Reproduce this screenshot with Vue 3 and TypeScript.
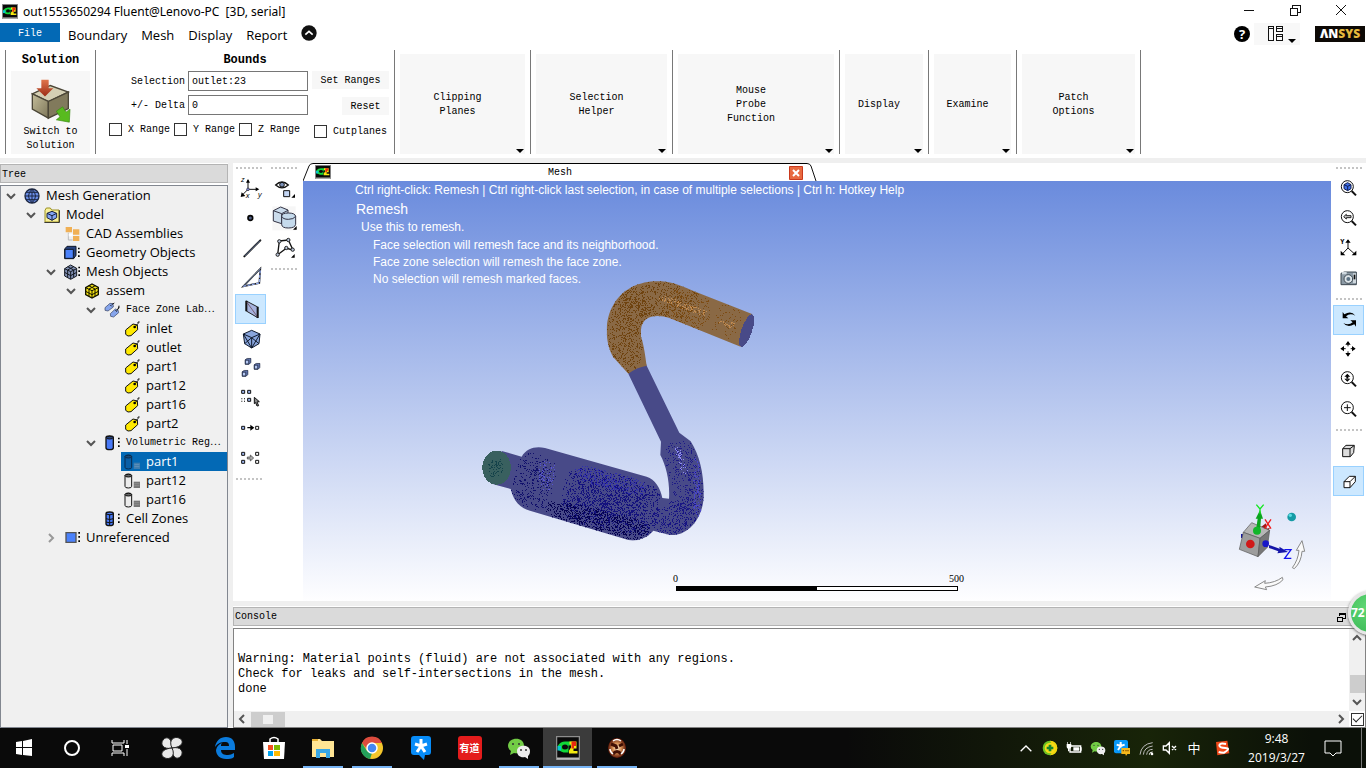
<script setup lang="ts">
interface TreeNode { label: string; icon: string; level: number; toggle?: 'open' | 'closed'; selected?: boolean; mono?: boolean }
interface Panel { lines: string[]; size: string }
interface Task { icon: string; title: string; state?: 'running' | 'active' }
interface Patch { cx: number; cy: number; rx: number; ry: number; angle: number; density: number; color: string; seed: number }

const menus: string[] = ['Boundary', 'Mesh', 'Display', 'Report']

const panels: Panel[] = [
  { lines: ['Clipping', 'Planes'], size: 'w-clip' },
  { lines: ['Selection', 'Helper'], size: 'w-sel' },
  { lines: ['Mouse', 'Probe', 'Function'], size: 'w-mouse' },
  { lines: ['Display'], size: 'w-small' },
  { lines: ['Examine'], size: 'w-examine' },
  { lines: ['Patch', 'Options'], size: 'w-patch' },
]

const nodes: TreeNode[] = [
  { label: 'Mesh Generation', icon: 'globe', level: 0, toggle: 'open' },
  { label: 'Model', icon: 'model', level: 1, toggle: 'open' },
  { label: 'CAD Assemblies', icon: 'cad', level: 2 },
  { label: 'Geometry Objects', icon: 'geometry', level: 2 },
  { label: 'Mesh Objects', icon: 'meshobj', level: 2, toggle: 'open' },
  { label: 'assem', icon: 'assem', level: 3, toggle: 'open' },
  { label: 'Face Zone Lab⋯', icon: 'tags', level: 4, toggle: 'open', mono: true },
  { label: 'inlet', icon: 'tag', level: 5 },
  { label: 'outlet', icon: 'tag', level: 5 },
  { label: 'part1', icon: 'tag', level: 5 },
  { label: 'part12', icon: 'tag', level: 5 },
  { label: 'part16', icon: 'tag', level: 5 },
  { label: 'part2', icon: 'tag', level: 5 },
  { label: 'Volumetric Reg⋯', icon: 'volume', level: 4, toggle: 'open', mono: true },
  { label: 'part1', icon: 'region-on', level: 5, selected: true },
  { label: 'part12', icon: 'region', level: 5 },
  { label: 'part16', icon: 'region', level: 5 },
  { label: 'Cell Zones', icon: 'cells', level: 4 },
  { label: 'Unreferenced', icon: 'unref', level: 2, toggle: 'closed' },
]

const pickTools = ['axes', 'point', 'edge', 'tri', 'face', 'cell', 'objects', 'choose', 'one', 'many']
const viewTools = ['eye', 'solids', 'nodes']
const rightTools: string[][] = [['fit', 'back', 'triad', 'camera'], ['rotate', 'move', 'zoom', 'plus'], ['persp', 'ortho']]
const pressed = new Set(['face', 'rotate', 'ortho'])

const systemTasks: Task[] = [
  { icon: 'windows', title: 'Start' }, { icon: 'cortana', title: 'Search' }, { icon: 'taskview', title: 'Task View' },
]
const tasks: Task[] = [
  { icon: 'edge-browser', title: 'Edge' },
  { icon: 'store', title: 'Store' },
  { icon: 'folder', title: 'Explorer', state: 'running' },
  { icon: 'chrome', title: 'Chrome', state: 'running' },
  { icon: 'star', title: 'Star' },
  { icon: 'youdao', title: 'Youdao' },
  { icon: 'wechat', title: 'WeChat', state: 'running' },
  { icon: 'fluent', title: 'Fluent', state: 'active' },
  { icon: 'orb', title: 'Launcher', state: 'running' },
]
const tray = ['up', 'shield', 'battery', 'wechat', 'starchat', 'wifi', 'mute']

// Mesh texture: one-pixel cells scattered over elliptical patches, denser towards the centre.
function speckle(p: Patch): string {
  let s = p.seed
  const rand = () => { s = (s * 1664525 + 1013904223) % 4294967296; return s / 4294967296 }
  const a = (p.angle * Math.PI) / 180
  const r = Math.max(p.rx, p.ry)
  let d = ''
  for (let y = Math.floor((p.cy - r) / 3) * 3; y < p.cy + r; y += 3) {
    for (let x = Math.floor((p.cx - r) / 3) * 3; x < p.cx + r; x += 3) {
      const u = ((x - p.cx) * Math.cos(a) + (y - p.cy) * Math.sin(a)) / p.rx
      const v = ((y - p.cy) * Math.cos(a) - (x - p.cx) * Math.sin(a)) / p.ry
      const q = u * u * u * u + v * v * v * v
      if (q < 1 && rand() < p.density * (1 - q * 0.6)) d += `M${x} ${y}h3v3h-3z`
    }
  }
  return d
}

const orangePatches: Patch[] = [
  { cx: 470, cy: 180, rx: 60, ry: 130, angle: 12, density: 0.25, color: '#6f430f', seed: 3 },
  { cx: 560, cy: 80, rx: 120, ry: 60, angle: 8, density: 0.22, color: '#6f430f', seed: 11 },
  { cx: 650, cy: 120, rx: 70, ry: 60, angle: 22, density: 0.2, color: '#7d4c14', seed: 17 },
  { cx: 770, cy: 155, rx: 40, ry: 50, angle: 22, density: 0.1, color: '#7d4c14', seed: 19 },
  { cx: 640, cy: 105, rx: 80, ry: 10, angle: 20, density: 0.25, color: '#c08a50', seed: 23 },
  { cx: 770, cy: 160, rx: 26, ry: 10, angle: 20, density: 0.25, color: '#c08a50', seed: 29 },
]
const bluePatches: Patch[] = [
  { cx: 190, cy: 635, rx: 60, ry: 85, angle: 14, density: 0.18, color: '#11106c', seed: 31 },
  { cx: 420, cy: 695, rx: 150, ry: 85, angle: 14, density: 0.36, color: '#14127e', seed: 37 },
  { cx: 385, cy: 750, rx: 160, ry: 34, angle: 14, density: 0.34, color: '#050250', seed: 41 },
  { cx: 420, cy: 630, rx: 110, ry: 26, angle: 14, density: 0.26, color: '#302eae', seed: 43 },
  { cx: 230, cy: 615, rx: 26, ry: 44, angle: 0, density: 0.16, color: '#5754d6', seed: 47 },
  { cx: 645, cy: 620, rx: 48, ry: 110, angle: -14, density: 0.2, color: '#1d1a86', seed: 53 },
  { cx: 620, cy: 740, rx: 70, ry: 50, angle: -20, density: 0.22, color: '#171484', seed: 59 },
  { cx: 680, cy: 650, rx: 12, ry: 90, angle: 0, density: 0.3, color: '#4a46cc', seed: 61 },
  { cx: 632, cy: 570, rx: 10, ry: 44, angle: -18, density: 0.2, color: '#8d8af2', seed: 67 },
]
const greenPatch: Patch = { cx: 75, cy: 592, rx: 22, ry: 28, angle: 0, density: 0.3, color: '#14424a', seed: 71 }
</script>

<template>
  <div class="app">
    <svg class="defs" aria-hidden="true">
      <defs>
        <linearGradient id="g-box" x1="0" y1="0" x2="1" y2="1"><stop offset="0" stop-color="#c4bd9a" /><stop offset="1" stop-color="#7d7659" /></linearGradient>
        <linearGradient id="g-red" x1="0" y1="0" x2="0" y2="1"><stop offset="0" stop-color="#e0764d" /><stop offset="1" stop-color="#9c2c14" /></linearGradient>
        <radialGradient id="g-orb"><stop offset="0" stop-color="#fff4dc" /><stop offset=".45" stop-color="#d99458" /><stop offset="1" stop-color="#5c1606" /></radialGradient>
      </defs>
      <symbol id="fluent" viewBox="0 0 48 48" preserveAspectRatio="none">
        <path d="M1 1h46v46H1z" fill="#0a0a0a" stroke="#8d8d8d" stroke-width="3" /><path d="M2 45h44" stroke="#bbb" stroke-width="4" />
        <path d="M4 19q5-8 14-8h15v8h-8v14H15q-6-2-8-4l-3-2z" fill="#10d838" /><path d="M3 20h7v9H3z" fill="#08c4d0" /><path d="M27 11h14v14h-6v5h8v5H26v-6l4-6v-6h-3z" fill="#f4ea10" /><path d="M31 11h9v9h-4v5h-5z" fill="#ea2a10" /><ellipse cx="18" cy="22" rx="6" ry="5" fill="#0a0a0a" />
      </symbol>
      <symbol id="package" viewBox="0 0 120 132">
        <path d="M4 46l54-25 54 20-60 28z" fill="#d5d0b4" stroke="#4b4637" stroke-width="4" /><path d="M4 46l48 23v50L4 92z" fill="url(#g-box)" stroke="#4b4637" stroke-width="4" /><path d="M52 69l60-28v49l-60 29z" fill="#817a5c" stroke="#4b4637" stroke-width="4" />
        <path d="M31 4h22v25h14L42 54 16 29h15z" fill="url(#g-red)" /><path d="M76 98l19-13 10 16 12-9-2 39-39-7 11-9z" fill="#58bb1e" stroke="#3a8a10" stroke-width="2" />
      </symbol>
      <symbol id="globe" viewBox="0 0 48 48"><circle cx="24" cy="24" r="21" fill="#6a8ee8" stroke="#1c2742" stroke-width="4" /><path d="M3 24h42M24 3v42M7 13h34M7 35h34M24 3q-21 21 0 42M24 3q21 21 0 42" fill="none" stroke="#1c2742" stroke-width="3" /></symbol>
      <symbol id="model" viewBox="0 0 48 48"><path d="M3 10l4-7h12l4 6h22v36H3z" fill="#f7f09a" stroke="#9c9120" stroke-width="3" /><path d="M9 19l15-6 14 6v13l-14 8-15-8z" fill="#84a6f6" stroke="#18203a" stroke-width="3" /><path d="M9 19l15 7 14-7M24 26v14" fill="none" stroke="#18203a" stroke-width="3" /><path d="M1 47h45V10" fill="none" stroke="#222" stroke-width="3" /></symbol>
      <symbol id="cad" viewBox="0 0 48 48"><path d="M5 3h19v16H5zM27 10h19v16H27zM27 30h19v15H27z" fill="#f0b055" /><path d="M13 20v22h13M13 28h11" fill="none" stroke="#bbb" stroke-width="3" /><path d="M14 23h12v8H14z" fill="#fff" /></symbol>
      <symbol id="geometry" viewBox="0 0 48 48"><path d="M2 12l7-8h27v27l-7 10H2z" fill="#27427e" stroke="#101828" stroke-width="3" /><path d="M3 13h25v27H3z" fill="#4b82fb" stroke="#101828" stroke-width="3" /><path d="M42 8h5v5h-5zM42 19h5v5h-5zM42 31h5v5h-5z" /></symbol>
      <symbol id="meshobj" viewBox="0 0 48 48"><path d="M2 14L20 3l18 10v23L20 46 2 36z" fill="#8190b3" stroke="#141820" stroke-width="3" /><path d="M2 14l18 9 18-9M20 23v22M2 25l18 10 18-10M11 8l18 10v22M29 8L11 18v23" fill="none" stroke="#141820" stroke-width="3" /><path d="M43 8h5v5h-5zM43 19h5v5h-5zM43 31h5v5h-5z" /></symbol>
      <symbol id="assem" viewBox="0 0 48 48"><path d="M5 14L24 3l19 10v22L24 45 5 35z" fill="#f6e414" stroke="#141400" stroke-width="4" /><path d="M5 14l19 9 19-9M24 23v22M5 25l19 10 19-10M14 8l19 10v22M34 8L15 18v22" fill="none" stroke="#141400" stroke-width="3" /></symbol>
      <symbol id="tag" viewBox="0 0 48 48"><path d="M5 27L27 9l13 3 1 14-20 18-9 1-7-5z" fill="#ffe900" stroke="#111" stroke-width="3" /><circle cx="32" cy="18" r="4" /><path d="M34 16l8-8V3h5" fill="none" stroke="#111" stroke-width="3" /></symbol>
      <symbol id="tags" viewBox="0 0 48 48"><path d="M3 17L18 4l9 1 1 10-16 12-9-2zM19 35l15-14 8 3 2 8-15 13-9-2z" fill="#86a5ec" stroke="#33405f" stroke-width="2" /><path d="M23 8l8-5M38 26l7-8v-7M19 9l4 4M34 25l4 4" stroke="#222" stroke-width="3" /></symbol>
      <symbol id="volume" viewBox="0 0 48 48"><path d="M6 8q0-5 11-5t11 5v30q0 6-11 6T6 38z" fill="#4879f6" stroke="#111" stroke-width="4" /><ellipse cx="17" cy="8" rx="10" ry="4" fill="#27427e" stroke="#111" stroke-width="3" /><path d="M42 8h5v5h-5zM42 19h5v5h-5zM42 31h5v5h-5z" /></symbol>
      <symbol id="cells" viewBox="0 0 48 48"><path d="M6 8q0-5 11-5t11 5v30q0 6-11 6T6 38z" fill="#4879f6" stroke="#111" stroke-width="4" /><path d="M6 9q11 5 22 0M6 23q11 5 22 0M17 10v34M6 33q11 5 22 0" fill="none" stroke="#111" stroke-width="3" /><path d="M42 8h5v5h-5zM42 19h5v5h-5zM42 31h5v5h-5z" /></symbol>
      <symbol id="region" viewBox="0 0 48 48"><path d="M3 8q0-5 10-5t10 5v32q0 5-10 5T3 40z" fill="#ececec" stroke="#111" stroke-width="3" /><ellipse cx="13" cy="8" rx="10" ry="4" fill="#666" stroke="#111" stroke-width="3" /><path d="M29 26h19v19H29z" fill="#777" /><path d="M31 32h15M31 38h15" stroke="#999" stroke-width="2" /></symbol>
      <symbol id="region-on" viewBox="0 0 48 48"><path d="M3 8q0-5 10-5t10 5v32q0 5-10 5T3 40z" fill="#0a5fa6" stroke="#0a2b4c" stroke-width="3" /><ellipse cx="13" cy="8" rx="10" ry="4" fill="#1a4a78" stroke="#0a2b4c" stroke-width="3" /><path d="M29 26h19v19H29z" fill="#3f7cac" /><path d="M31 32h15M31 38h15" stroke="#6f9cc0" stroke-width="2" /></symbol>
      <symbol id="unref" viewBox="0 0 48 48"><path d="M6 8h30v29H6z" fill="#4b82fb" stroke="#555" stroke-width="4" /><path d="M43 6h5v5h-5zM43 18h5v5h-5zM43 31h5v5h-5z" /></symbol>

      <symbol id="axes" viewBox="0 0 90 90"><path d="M36 49V22M36 49h28M36 49L19 66" stroke="#111" stroke-width="3" /><path d="M30 29l6-11 6 11zM59 43l11 6-11 6zM17 58l-3 14 14-3z" /><circle cx="36" cy="49" r="4" fill="#8a93d8" stroke="#223" stroke-width="2" /></symbol>
      <symbol id="point" viewBox="0 0 90 90"><circle cx="43" cy="45" r="7" fill="#526085" stroke="#050505" stroke-width="5" /></symbol>
      <symbol id="edge" viewBox="0 0 90 90"><path d="M25 70l48-48" stroke="#111" stroke-width="6" stroke-linecap="round" /><path d="M26 69l46-46" stroke="#8fa9d8" stroke-width="2" /></symbol>
      <symbol id="tri" viewBox="0 0 90 90"><path d="M22 70l51-53-3 43z" fill="#fff" stroke="#222" stroke-width="5" /><path d="M22 70l51-53" stroke="#8fa9d8" stroke-width="2" /><path d="M22 70l48-10 3-43" fill="none" stroke="#8fa9ee" stroke-width="4" stroke-dasharray="9 4" /></symbol>
      <symbol id="face" viewBox="0 0 90 90"><path d="M31 24l34 18v32L31 54z" fill="#a4b1dc" stroke="#222" stroke-width="3" /><path d="M31 23v32M65 41v34" stroke="#111" stroke-width="6" /><path d="M32 27l32 44" stroke="#5d3440" stroke-width="2" /></symbol>
      <symbol id="cell" viewBox="0 0 90 90"><path d="M47 22l25 11-3 29-22 13-21-13-4-29z" fill="#89a5dc" stroke="#111b2d" stroke-width="3" /><path d="M22 33l25 11 25-11M47 44v31M22 33l25 42 25-42M26 62l21-18 22 18" fill="none" stroke="#111b2d" stroke-width="3" /></symbol>
      <symbol id="cubelet" viewBox="0 0 20 20"><path d="M2 6l6-4h10v11l-5 5H2z" fill="#6074ac" stroke="#16203a" stroke-width="2" /><path d="M3 7h9v10H3z" fill="#b4c7f2" stroke="#16203a" stroke-width="2" /></symbol>
      <symbol id="objects" viewBox="0 0 90 90"><use href="#cubelet" x="25" y="14" width="22" height="22" /><use href="#cubelet" x="52" y="29" width="22" height="22" /><use href="#cubelet" x="16" y="50" width="22" height="22" /></symbol>
      <symbol id="choose" viewBox="0 0 90 90"><path d="M17 22h9v9h-9zM35 22h9v9h-9zM35 46h9v9h-9z" fill="#9fb8f2" stroke="#111" stroke-width="3" /><path d="M16 46h3v3h-3zM24 46h3v3h-3zM16 53h3v3h-3zM24 53h3v3h-3z" /><path d="M55 43l15 13-7 1 5 11-5 1-4-10-4 3z" fill="#888" stroke="#111" stroke-width="3" /></symbol>
      <symbol id="one" viewBox="0 0 90 90"><path d="M17 40h9v9h-9z" fill="#9fb8f2" stroke="#111" stroke-width="3" /><path d="M59 40h9v9h-9z" fill="#fff" stroke="#111" stroke-width="3" /><path d="M34 42h9v-7l12 9-12 9v-7h-9z" /></symbol>
      <symbol id="many" viewBox="0 0 90 90"><path d="M17 28h9v9h-9zM17 52h9v9h-9z" fill="#9fb8f2" stroke="#111" stroke-width="3" /><path d="M59 28h9v9h-9zM59 52h9v9h-9z" fill="#fff" stroke="#111" stroke-width="3" /><path d="M34 42h9v-6l10 9-10 9v-6h-9z" fill="#aaa" stroke="#333" stroke-width="2" /></symbol>
      <symbol id="eye" viewBox="0 0 90 90"><path d="M14 36q19-18 38 0-19 17-38 0z" fill="#fff" stroke="#111" stroke-width="4" /><circle cx="33" cy="35" r="7" fill="#7a90b8" stroke="#111" stroke-width="3" /><path d="M38 53h18v18H38z" fill="#c4d6f4" stroke="#111" stroke-width="3" /><path d="M72 63v11H61z" /></symbol>
      <symbol id="solids" viewBox="0 0 90 90"><path d="M4 10h70v72H4z" fill="#f6f6f6" /><path d="M7 23l22-11 22 9v36l-16 6L7 54z" fill="#cbdcec" stroke="#334" stroke-width="3" /><path d="M7 23l25 9 19-10M32 32v28" fill="none" stroke="#334" stroke-width="3" /><path d="M32 40q0-10 20-10t22 10v24q-2 11-22 11T32 64z" fill="#c5daec" stroke="#334" stroke-width="3" /><path d="M32 40q4 9 20 9t22-9" fill="none" stroke="#334" stroke-width="3" /><path d="M77 69v11H66z" /></symbol>
      <symbol id="nodes" viewBox="0 0 90 90"><path d="M25 24l27-3 14 30-20-5-26 19z" fill="none" stroke="#111" stroke-width="4" /><g fill="#b9c5d9" stroke="#222" stroke-width="3"><circle cx="25" cy="25" r="5" /><circle cx="52" cy="21" r="5" /><circle cx="65" cy="50" r="5" /><circle cx="46" cy="45" r="5" /><circle cx="20" cy="65" r="5" /></g><path d="M71 63v11H60z" /></symbol>
      <symbol id="lens" viewBox="0 0 90 90"><circle cx="40" cy="41" r="18" fill="#fff" stroke="#111" stroke-width="3" /><path d="M53 54l13 13" stroke="#111" stroke-width="6" /></symbol>
      <symbol id="fit" viewBox="0 0 90 90"><use href="#lens" /><path d="M30 35l11-6 10 6v12l-10 6-11-6z" fill="#3f6fe8" stroke="#0e1c50" stroke-width="3" /><path d="M30 35l11 5 10-5M41 40v12" fill="none" stroke="#0e1c50" stroke-width="3" /></symbol>
      <symbol id="back" viewBox="0 0 90 90"><use href="#lens" /><path d="M29 41l8-7v4h14v6H37v4z" fill="#ccc" stroke="#222" stroke-width="3" /></symbol>
      <symbol id="triad" viewBox="0 0 90 90"><path d="M42 45V22M42 45L24 64M42 45l21 19" stroke="#111" stroke-width="3" /><path d="M34 29l8-10 8 10zM20 53v14h14zM67 53v14H53z" /></symbol>
      <symbol id="camera" viewBox="0 0 90 90"><path d="M21 31l10-4h36v38H21z" fill="#8c9aa5" stroke="#3d4851" stroke-width="3" /><path d="M24 27h14v7H24zM57 31h9v29h-9z" fill="#cfd8de" /><circle cx="43" cy="48" r="13" fill="#dfe6ea" stroke="#414d56" stroke-width="3" /><circle cx="43" cy="48" r="6" fill="#5d7384" /><path d="M59 35h5v14h-5z" fill="#111" /></symbol>
      <symbol id="rotate" viewBox="0 0 90 90"><path d="M26 24v19h17l-7-6q12-11 28-2-12-16-33-4z" /><path d="M66 68V49H49l7 6q-12 11-28 2 12 16 33 4z" /></symbol>
      <symbol id="move" viewBox="0 0 90 90"><path d="M42 25v12M42 52v12M23 44h12M50 44h12" stroke="#111" stroke-width="3" /><path d="M34 32l8-11 8 11zM34 57l8 11 8-11zM30 36l-11 8 11 8zM54 36l11 8-11 8z" /></symbol>
      <symbol id="zoom" viewBox="0 0 90 90"><use href="#lens" /><path d="M31 38l9-9 9 9zM31 44l9 9 9-9zM37 36h6v10h-6z" /></symbol>
      <symbol id="plus" viewBox="0 0 90 90"><use href="#lens" /><path d="M40 31v20M30 41h20" stroke="#111" stroke-width="3" /></symbol>
      <symbol id="persp" viewBox="0 0 90 90"><path d="M26 41l10-10h25l-2 22-10 12H26z" fill="#ddd" stroke="#111" stroke-width="3" /><path d="M26 41h22v24M48 41l12-9" fill="none" stroke="#111" stroke-width="3" /></symbol>
      <symbol id="ortho" viewBox="0 0 90 90"><path d="M30 50l16-16h18v16L48 68H30z" fill="#fff" stroke="#111" stroke-width="3" /><path d="M30 50h18v18M48 50l16-16" fill="none" stroke="#111" stroke-width="3" /></symbol>

      <symbol id="windows" viewBox="0 0 20 20"><path d="M2 4l6-1v6H2zM9 3l9-2v8H9zM2 10h6v7l-6-1zM9 10h9v8l-9-1z" fill="#fff" /></symbol>
      <symbol id="cortana" viewBox="0 0 20 20"><circle cx="10" cy="10" r="7" fill="none" stroke="#fff" stroke-width="2" /></symbol>
      <symbol id="taskview" viewBox="0 0 20 20"><path d="M2 2v3h12V2M3 7h9v6H3zM2 18v-3h12v3M17 2v4M17 11v7" fill="none" stroke="#fff" /><path d="M15 7h4v3h-4z" fill="#fff" /></symbol>
      <symbol id="clover" viewBox="0 0 24 24"><g fill="#e9e9e9" stroke="#222"><path d="M12 12C3 14 0 8 3 4s9-3 9 8z" /><path d="M12 12C8 4 14 0 19 2s5 9-7 10z" /><path d="M12 12c9-2 12 4 9 8s-9 3-9-8z" /><path d="M12 12c4 8-2 12-7 10s-5-9 7-10z" /></g></symbol>
      <symbol id="edge-browser" viewBox="0 0 24 24"><path d="M2 11C3 5 7 1 13 1c6 0 9 4 9 10v3H8c0 4 3 5 7 5 2 0 4-1 6-2v4c-2 2-5 2-8 2-6 0-10-4-10-9 1-4 3-6 6-7-1 1-1 2-1 3h8c0-3-1-4-4-4-4 0-7 1-10 5z" fill="#0b7bdc" /></symbol>
      <symbol id="store" viewBox="0 0 24 24"><path d="M8 7V3q4-3 8 0v4" fill="none" stroke="#fff" stroke-width="1.5" /><path d="M1 6h22l-1 17H2z" fill="#fff" /><path d="M6 9h5v5H6z" fill="#f25022" /><path d="M12 9h6v5h-6z" fill="#7fba00" /><path d="M6 15h5v5H6z" fill="#00a4ef" /><path d="M12 15h6v5h-6z" fill="#ffb900" /></symbol>
      <symbol id="folder" viewBox="0 0 24 24"><path d="M1 3h8l2 2h12v16H1z" fill="#ffe594" /><path d="M1 3h6v2H1z" fill="#e5af35" /><path d="M5 22v-9h14v9h-4v-5H9v5z" fill="#39a7e5" /></symbol>
      <symbol id="chrome" viewBox="0 0 24 24"><circle cx="12" cy="12" r="11" fill="#f4c62c" /><path d="M2 7a11 11 0 0120 0H12a5 5 0 00-5 6z" fill="#dd4b3e" /><path d="M2 7l5 8 5 2-2 6A11 11 0 012 7z" fill="#23a05b" /><circle cx="12" cy="12" r="5" fill="#4487f2" stroke="#fff" stroke-width="1.5" /></symbol>
      <symbol id="star" viewBox="0 0 24 24"><path d="M5 0h14q3 0 3 3v13q0 3-3 3h-3l-1 5-5-5H5q-3 0-3-3V3q0-3 3-3z" fill="#078cf8" /><path d="M12 3v7L6 8M12 10l6-2M12 10l-4 6M12 10l4 6" fill="none" stroke="#fff" stroke-width="3" /></symbol>
      <symbol id="wechat" viewBox="0 0 24 24"><path d="M1 10c0-9 16-10 16 0 0 7-7 8-10 7l-4 2 1-4q-3-2-3-5z" fill="#72cc45" /><path d="M10 15c0-7 13-7 13 0 0 3-1 4-2 5v3l-3-2c-4 1-8-1-8-6z" fill="#eee" /><g fill="#333"><circle cx="6" cy="8" r="1" /><circle cx="12" cy="8" r="1" /><circle cx="14" cy="14" r="1" /><circle cx="19" cy="14" r="1" /></g></symbol>
      <symbol id="orb" viewBox="0 0 24 24"><ellipse cx="12" cy="12" rx="9" ry="10" fill="url(#g-orb)" /><path d="M6 8l5 2 1 3M18 8l-4 2M8 18q4-5 8 0" fill="none" stroke="#401004" stroke-width="3" /><path d="M8 5q4-3 8 0M5 13q0 3 3 5M19 13q0 3-3 5" fill="none" stroke="#fff" stroke-width="1.5" /></symbol>
      <symbol id="up" viewBox="0 0 24 24"><path d="M4 17l8-8 8 8" fill="none" stroke="#fff" stroke-width="2" /></symbol>
      <symbol id="shield" viewBox="0 0 24 24"><circle cx="12" cy="12" r="11" fill="#6fc324" /><path d="M12 1a11 11 0 010 22q9-9 0-22z" fill="#f5d30c" /><circle cx="12" cy="12" r="8" fill="#f5dc18" /><path d="M10 7h4v3h3v4h-3v3h-4v-3H7v-4h3z" fill="#148430" /></symbol>
      <symbol id="battery" viewBox="0 0 24 24"><path d="M6 9h16v9H6z" fill="none" stroke="#fff" stroke-width="2" /><path d="M11 11h9v5h-9zM23 11h1v5h-1zM1 6h7v4q0 3-3 3v4H3v-4q-2-1-2-3zM2 3h1v3H2zM6 3h1v3H6z" fill="#fff" /></symbol>
      <symbol id="starchat" viewBox="0 0 24 24"><rect width="21" height="20" rx="3" fill="#0898f8" /><path d="M10 3v6L4 7M10 9l6-2M10 9l-4 6" fill="none" stroke="#fff" stroke-width="3" /><path d="M11 12h13v9h-4l-2 3-1-3h-6z" fill="#f4b71b" /><path d="M13 16h2M17 16h2M20 16h2" stroke="#875200" stroke-width="2" /></symbol>
      <symbol id="wifi" viewBox="0 0 24 24"><g fill="none" stroke="#bbb" stroke-width="1.5"><path d="M3 22Q5 6 22 4M8 22Q9 11 22 9M13 22q1-8 9-8" /><path d="M17 22q0-4 5-4" stroke="#fff" /></g><circle cx="21" cy="21" r="2" fill="#fff" /></symbol>
      <symbol id="mute" viewBox="0 0 24 24"><path d="M2 9h4l5-5v16l-5-5H2zM15 9l6 6M21 9l-6 6" fill="none" stroke="#fff" stroke-width="2" /></symbol>
    </svg>

    <header class="titlebar">
      <svg class="app-icon"><use href="#fluent" /></svg>
      <span class="app-title">out1553650294 Fluent@Lenovo-PC&nbsp; [3D, serial]</span>
      <button class="win" aria-label="Minimize"><svg viewBox="0 0 12 12" shape-rendering="crispEdges"><path d="M1 6h10" /></svg></button>
      <button class="win" aria-label="Restore"><svg viewBox="0 0 12 12" shape-rendering="crispEdges"><path d="M1 4h7v7H1zM3 4V1h8v7H8" /></svg></button>
      <button class="win" aria-label="Close"><svg viewBox="0 0 12 12"><path d="M1 1l10 10M11 1L1 11" /></svg></button>
    </header>

    <nav class="menubar">
      <button class="file">File</button>
      <button v-for="m in menus" :key="m" class="menu">{{ m }}</button>
      <button class="collapse" aria-label="Collapse ribbon"><svg viewBox="0 0 48 48"><circle cx="24" cy="24" r="23" fill="#111" /><path d="M13 29l11-10 11 10" fill="none" stroke="#fff" stroke-width="5" /></svg></button>
      <span class="spacer"></span>
      <button class="help" aria-label="Help">?</button>
      <button class="layout" aria-label="Arrange windows"><svg viewBox="0 0 16 16" shape-rendering="crispEdges"><path d="M1 1h5v14H1zM1 3h5M9 1h6v5H9zM9 3h6M9 9h6v6H9zM9 11h6" fill="none" stroke="#111" /></svg><i class="caret"></i></button>
      <span class="brand"><b>ΛN</b><b class="gold">SYS</b></span>
    </nav>

    <section class="ribbon">
      <div class="group solution">
        <h2>Solution</h2>
        <button class="switch"><svg><use href="#package" /></svg><span>Switch to<br>Solution</span></button>
      </div>
      <div class="group bounds">
        <h2>Bounds</h2>
        <div class="bounds-form">
          <label for="sel">Selection</label><input id="sel" type="text" value="outlet:23"><button>Set Ranges</button>
          <label for="delta">+/- Delta</label><input id="delta" type="text" value="0"><button class="reset">Reset</button>
        </div>
        <div class="checks">
          <label><input type="checkbox">X Range</label>
          <label><input type="checkbox">Y Range</label>
          <label><input type="checkbox">Z Range</label>
          <label class="cut"><input type="checkbox">Cutplanes</label>
        </div>
      </div>
      <div v-for="p in panels" :key="p.lines[0]" class="group">
        <button class="panel" :class="p.size">
          <span><template v-for="(l, i) in p.lines" :key="l"><br v-if="i">{{ l }}</template></span>
          <i class="caret"></i>
        </button>
      </div>
    </section>

    <main class="main">
      <aside class="side">
        <h2 class="bar">Tree</h2>
        <ul class="tree">
          <li v-for="(n, i) in nodes" :key="i" :style="{ paddingLeft: n.level * 20 + 'px' }" :class="{ selected: n.selected, mono: n.mono }">
            <span class="toggle"><svg v-if="n.toggle" viewBox="0 0 10 10" :class="n.toggle"><path v-if="n.toggle === 'open'" d="M1 3l4 4 4-4" /><path v-else d="M3 1l4 4-4 4" /></svg></span>
            <span class="node"><svg><use :href="'#' + n.icon" /></svg><span>{{ n.label }}</span></span>
          </li>
        </ul>
      </aside>

      <div class="work">
        <section class="view">
          <div class="toolbar">
            <i class="grip"></i>
            <button v-for="t in pickTools" :key="t" :class="{ on: pressed.has(t) }" :aria-label="t">
              <svg viewBox="0 0 90 90"><use :href="'#' + t" /><g v-if="t === 'axes'" font-size="24" font-style="italic"><text x="15" y="27">z</text><text x="29" y="76">x</text><text x="66" y="72">y</text></g></svg>
            </button>
            <i class="grip"></i>
          </div>
          <div class="toolbar second">
            <i class="grip"></i>
            <button v-for="t in viewTools" :key="t" :aria-label="t"><svg><use :href="'#' + t" /></svg></button>
            <i class="grip"></i>
          </div>

          <div class="stage">
            <div class="tab">
              <svg class="slant" viewBox="0 0 10 18"><path d="M0 18L6 3Q7 .5 10 .5" /></svg>
              <div class="tab-body"><svg><use href="#fluent" /></svg><span>Mesh</span><button aria-label="Close tab"><svg viewBox="0 0 14 14"><path d="M4 4l6 6M10 4l-6 6" /></svg></button></div>
              <svg class="slant" viewBox="0 0 10 18"><path d="M0 .5Q3 .5 4 3L9 18" /></svg>
            </div>
            <div class="canvas">
              <div class="hints">
                <p>Ctrl right-click: Remesh | Ctrl right-click last selection, in case of multiple selections | Ctrl h: Hotkey Help</p>
                <h3>Remesh</h3>
                <p class="in1">Use this to remesh.</p>
                <p class="in2">Face selection will remesh face and its neighborhood.</p>
                <p class="in2">Face zone selection will remesh the face zone.</p>
                <p class="in2">No selection will remesh marked faces.</p>
              </div>
              <svg class="model-view" viewBox="0 0 900 840" shape-rendering="crispEdges">
                <clipPath id="c-orange"><path d="M475 311L430 262C405 220 402 150 430 105C460 50 520 30 575 34C610 36 640 50 680 67L848 133L812 230L600 145C560 130 515 137 513 180V200C522 225 526 260 530 287Q500 292 475 311Z" /></clipPath>
                <clipPath id="c-blue"><path d="M155 560C170 535 195 528 225 534L530 620C555 628 572 655 577 684L597 686C600 640 590 590 571 555L573 515L475 311L478 280L524 270L530 287L628 488L662 514C690 560 702 610 701 680C698 750 650 800 600 795L550 782C530 805 500 815 475 810L180 722C140 712 128 680 122 657L70 643L95 543Z" /></clipPath>
                <g clip-path="url(#c-blue)"><path d="M0 0h900v840H0z" fill="#484a88" /><path v-for="p in bluePatches" :key="p.seed" :d="speckle(p)" :fill="p.color" /></g>
                <g clip-path="url(#c-orange)"><path d="M0 0h900v840H0z" fill="#8a6945" /><path v-for="p in orangePatches" :key="p.seed" :d="speckle(p)" :fill="p.color" /></g>
                <ellipse cx="830" cy="182" rx="16" ry="51" transform="rotate(19 830 182)" fill="#484a88" />
                <ellipse cx="80" cy="593" rx="43" ry="51" fill="#39605f" /><path :d="speckle(greenPatch)" :fill="greenPatch.color" />
              </svg>
              <div class="scale"><div class="ticks"><span>0</span><span>500</span></div><div class="rule"><i></i></div></div>
              <svg class="compass" viewBox="0 0 330 330">
                <path d="M63 132h10v12H63z" fill="#1515a0" />
                <path d="M124 110l14-10 2 16 10-3-6 10z" fill="#a01818" />
                <path d="M95 98l54 23-29 24-50-18z" fill="#b5b5b5" stroke="#555" stroke-width="2" /><path d="M70 127l50 18-6 55-56-22z" fill="#9d9d9d" stroke="#555" stroke-width="2" /><path d="M120 145l29-24-7 51-28 28z" fill="#777" stroke="#555" stroke-width="2" />
                <path d="M108 120l5-34h-6l13-26 9 26h-6l-3 34z" fill="#0aa51e" /><circle cx="111" cy="122" r="12" fill="#12b52a" /><circle cx="91" cy="162" r="13" fill="#d01818" /><circle cx="137" cy="161" r="10" fill="#1818c8" />
                <path d="M147 165l32 11-1-6 26 16-32 4 3-6-28-10z" fill="#1616a8" />
                <path d="M109 44l11 13 11-13M120 57v14" fill="none" stroke="#12e820" stroke-width="4" /><path d="M135 88l18 28M153 88l-19 28" stroke="#f01a1a" stroke-width="4" /><path d="M193 179h20l-19 26h20" fill="none" stroke="#1010f0" stroke-width="4" />
                <circle cx="215" cy="81" r="13" fill="#159ba5" /><circle cx="211" cy="76" r="5" fill="#58dce2" />
                <path d="M217 233q17-22 20-52h-8l17-29 8 32h-8q-2 32-23 52zM187 262q-21 16-53 18l2-8-32 19 36 8-4-8q37-3 53-22z" fill="#fafafa" stroke="#8a8a8a" stroke-width="3" />
              </svg>
            </div>
          </div>

          <div class="toolbar right">
            <template v-for="(g, i) in rightTools" :key="i">
              <i class="grip"></i>
              <button v-for="t in g" :key="t" :class="{ on: pressed.has(t) }" :aria-label="t">
                <svg viewBox="0 0 90 90"><use :href="'#' + t" /><text v-if="t === 'triad'" x="19" y="34" font-size="20" font-weight="bold">Y</text></svg>
              </button>
            </template>
          </div>
        </section>

        <section class="console">
          <h2 class="bar"><span>Console</span><button aria-label="Float console"><svg viewBox="0 0 10 10" shape-rendering="crispEdges"><path d="M1 5h5v4H1zM3 4V1h6v5H6M1 5h5M3 2h6" /></svg></button></h2>
          <div class="console-box">
            <pre>Warning: Material points (fluid) are not associated with any regions.
Check for leaks and self-intersections in the mesh.
done</pre>
            <div class="vbar"><svg viewBox="0 0 10 10"><path d="M1 7l4-4 4 4" /></svg><i></i><svg viewBox="0 0 10 10"><path d="M1 3l4 4 4-4" /></svg></div>
            <div class="hbar"><svg viewBox="0 0 10 10"><path d="M7 1L3 5l4 4" /></svg><i></i><svg class="end" viewBox="0 0 10 10"><path d="M3 1l4 4-4 4" /></svg></div>
            <label class="wrap" aria-label="Wrap text"><input type="checkbox" checked></label>
          </div>
        </section>
      </div>
    </main>

    <footer class="taskbar">
      <button v-for="t in systemTasks" :key="t.icon" class="sys" :aria-label="t.title"><svg><use :href="'#' + t.icon" /></svg></button>
      <button class="wide" aria-label="Clover"><svg><use href="#clover" /></svg></button>
      <button v-for="t in tasks" :key="t.icon" class="task" :class="t.state" :aria-label="t.title">
        <span v-if="t.icon === 'youdao'" class="youdao">有道</span>
        <svg v-else><use :href="'#' + t.icon" /></svg>
      </button>
      <span class="spacer"></span>
      <button v-for="t in tray" :key="t" class="tray" :aria-label="t"><svg><use :href="'#' + t" /></svg></button>
      <button class="tray ime">中</button>
      <button class="sogou" aria-label="Input method"><svg viewBox="0 0 24 24"><path d="M3 3l17-2 3 19-18 3z" fill="#f04818" /><path d="M18 6Q8 4 8 8t9 4-2 7q-5 0-8-1" fill="none" stroke="#fff" stroke-width="3" /></svg></button>
      <time class="clock">9:48<br>2019/3/27</time>
      <button class="notice" aria-label="Notifications"><svg viewBox="0 0 18 18"><path d="M1 2h16v12h-5l-3 3-3-3H1z" fill="none" stroke="#fff" /></svg></button>
    </footer>

    <div class="floater"><span>72</span></div>
  </div>
</template>

<style>
html, body { margin: 0; background: #fff; }
body { overflow: hidden; }
</style>

<style scoped>
.app { --mono: "Liberation Mono", "Noto Sans CJK SC", monospace; --ui: "Open Sans", "Noto Sans CJK SC", sans-serif; position: relative; display: flex; flex-direction: column; height: 100vh; overflow: hidden; background: #fff; color: #000; font: 10px/14px var(--mono); }
.defs { position: absolute; width: 0; height: 0; }
button { border: 0; padding: 0; margin: 0; background: none; font: inherit; color: inherit; display: flex; align-items: center; justify-content: center; }
h2, h3, p, pre, ul { margin: 0; padding: 0; }
svg { display: block; flex: none; }
.spacer { flex: 1; }
.caret { border: 4px solid transparent; border-top-color: #000; border-bottom: 0; }

.titlebar { display: flex; align-items: center; height: 23px; padding-right: 2px; font: 12px/22px "Noto Sans", sans-serif; }
.app-icon { width: 16px; height: 15px; margin: 0 5px 0 2px; }
.app-title { flex: 1; }
.win { width: 46px; height: 20px; align-self: flex-start; }
.win svg { width: 12px; height: 12px; fill: none; stroke: #111; }

.menubar { display: flex; align-items: flex-start; height: 27px; font: 13px/18px var(--ui); }
.file { width: 60px; height: 19px; padding-top: 2px; background: #0369b5; color: #fff; font: 10px/14px var(--mono); }
.menu { margin: 3px 0 0 8px; padding: 0 3px; }
.file + .menu { margin-left: 5px; }
.collapse { margin: 2px 0 0 11px; }
.collapse svg { width: 16px; height: 16px; }
.help { width: 16px; height: 16px; margin: 3px 4px 0 0; border-radius: 50%; background: #000; color: #fff; font: bold 13px/16px var(--ui); }
.layout { width: 46px; height: 22px; background: #f8f8f8; margin-right: 15px; align-items: flex-end; padding: 0 0 2px 8px; gap: 5px; box-sizing: border-box; }
.layout svg { width: 16px; height: 16px; margin-bottom: 2px; }
.brand { width: 50px; height: 16px; margin: 3px 1px 0 0; background: #0d0905; color: #fff; font: bold 12px/16px var(--ui); text-align: center; }
.gold { color: #e5b93c; }

.ribbon { display: flex; height: 104px; padding-left: 5px; }
.group { border-right: 1px solid #787878; padding: 4px 5px 0; }
.group h2 { font: bold 12px/14px var(--mono); text-align: center; }
.group button { background: #f7f7f7; }
.solution { border-left: 1px solid #787878; padding-top: 3px; }
.switch { box-sizing: border-box; flex-direction: column; justify-content: flex-start; width: 79px; height: 83px; margin-top: 4px; gap: 2px; padding-top: 7px; }
.switch svg { width: 40px; height: 45px; }
.bounds { width: 288px; padding-top: 3px; }
.bounds-form { display: grid; grid-template-columns: 84px 120px 1fr; column-gap: 3px; row-gap: 4px; margin-top: 4px; align-items: start; }
.bounds-form label { line-height: 22px; height: 20px; text-align: right; }
.bounds-form input { box-sizing: border-box; width: 120px; height: 20px; border: 1px solid #767676; padding: 1px 3px 0; font: inherit; color: inherit; background: #fff; }
.bounds-form button { width: 77px; height: 18px; justify-self: end; padding-top: 1px; box-sizing: border-box; }
.bounds-form .reset { width: 47px; margin-top: 2px; }
.checks { display: flex; margin: 8px 0 0 8px; gap: 4px; }
.checks label { display: flex; align-items: center; gap: 6px; height: 13px; }
.checks .cut { margin: 2px 0 0 10px; }
input[type="checkbox"] { appearance: none; width: 13px; height: 13px; margin: 0; border: 1px solid #333; background: #fff; box-sizing: border-box; }
.panel { position: relative; height: 100px; box-sizing: border-box; padding: 2px 10px 0 0; }
.panel .caret { position: absolute; right: 1px; bottom: 1px; }
.w-clip { width: 125px; } .w-sel { width: 131px; } .w-mouse { width: 156px; } .w-small { width: 78px; } .w-examine { width: 77px; } .w-patch { width: 113px; }

.main { flex: 1; display: flex; gap: 5px; margin-top: 4px; border-top: 5px solid #efefef; background: #efefef; min-height: 0; }
.side { width: 228px; display: flex; flex-direction: column; background: #fff; }
.bar { box-sizing: border-box; height: 19px; border: 1px solid #b4b4b4; background: #dadada; font: 10px/19px var(--mono); padding: 0 1px; margin-top: 1px; }
.tree { flex: 1; list-style: none; margin-top: 2px; border: 1px solid #828790; background: #f0f0f0; font: 13px/19px var(--ui); overflow: hidden; }
.tree li { display: flex; height: 19px; }
.tree .mono { font: 10px/19px var(--mono); }
.toggle { width: 20px; display: flex; align-items: center; justify-content: center; }
.toggle svg { width: 10px; height: 10px; fill: none; stroke: #555; stroke-width: 2; }
.toggle .closed { stroke: #999; }
.node { display: flex; flex: 1; align-items: center; gap: 6px; padding-left: 3px; white-space: nowrap; }
.node svg { width: 16px; height: 16px; }
.selected .node { background: #0369b5; color: #fff; }

.work { flex: 1; min-width: 0; display: flex; flex-direction: column; gap: 5px; }
.view { flex: 1; display: flex; background: #fff; min-height: 0; }
.toolbar { width: 31px; padding-left: 2px; display: flex; flex-direction: column; }
.toolbar.second { padding: 0; margin-left: 4px; width: 33px; }
.toolbar.right { width: 35px; padding: 0; align-items: center; }
.toolbar button { width: 31px; height: 30px; box-sizing: border-box; padding-bottom: 2px; }
.toolbar svg { width: 30px; height: 30px; font-family: var(--ui); }
.toolbar .on { background: #cce8ff; border: 1px solid #99d1ff; }
.grip { width: 27px; height: 11px; margin-left: 1px; background: repeating-linear-gradient(90deg, #c4c4c4 0 2px, transparent 2px 4px) 0 4px / 27px 2px no-repeat; }
.stage { flex: 1; min-width: 0; display: flex; flex-direction: column; }
.tab { display: flex; height: 18px; width: 50%; }
.slant { width: 10px; height: 18px; fill: none; stroke: #111; }
.tab-body { flex: 1; display: flex; align-items: center; border-top: 1px solid #000; padding: 0 2px; }
.tab-body > svg { width: 16px; height: 14px; margin-bottom: 2px; }
.tab-body span { flex: 1; text-align: center; }
.tab-body button { width: 14px; height: 14px; border-radius: 1px; background: #e8693f; outline: 1px solid #c9391d; outline-offset: -1px; margin-right: 2px; }
.tab-body button svg { width: 14px; stroke: #fff; stroke-width: 2; }
.canvas { position: relative; flex: 1; background: linear-gradient(#6a8bdd, #fefeff); overflow: hidden; }
.hints { padding: 1px 0 0 52px; color: #fff; font: 12px/17px "Liberation Sans", Arial, sans-serif; white-space: nowrap; }
.hints h3 { font: 14px/20px "Liberation Sans", Arial, sans-serif; padding-left: 1px; }
.in1 { padding-left: 6px; } .hints .in1 { margin-bottom: 1px; } .in2 { padding-left: 18px; }
.model-view { position: absolute; left: 167px; top: 89px; width: 300px; height: 280px; }
.scale { position: absolute; left: 370px; bottom: 10px; width: 291px; }
.ticks { display: flex; justify-content: space-between; font: 10px/14px "Liberation Serif", serif; }
.rule { box-sizing: border-box; width: 282px; height: 5px; border: 1px solid #000; background: #fff; margin-left: 3px; }
.rule i { display: block; width: 50%; height: 3px; background: #000; }
.compass { position: absolute; right: 1px; bottom: 1px; width: 110px; height: 110px; }

.console { height: 122px; display: flex; flex-direction: column; background: #fff; }
.console .bar { display: flex; justify-content: space-between; align-items: center; }
.console .bar button { margin-right: 18px; }
.console .bar svg { width: 10px; height: 10px; fill: none; stroke: #000; }
.console-box { flex: 1; margin-top: 2px; border: 1px solid #828282; display: grid; grid-template-columns: 1fr 16px; grid-template-rows: 1fr 16px; min-height: 0; }
.console pre { font: 12px/15px var(--mono); padding: 23px 0 0 4px; overflow: hidden; }
.vbar { background: #f0f0f0; display: flex; flex-direction: column; align-items: center; padding: 4px 0; }
.vbar i { width: 15px; height: 18px; background: #cdcdcd; margin: auto 0 4px; }
.vbar svg, .hbar svg { width: 10px; height: 10px; fill: none; stroke: #555; stroke-width: 2; }
.hbar { background: #f0f0f0; display: flex; align-items: center; padding: 0 3px; }
.hbar i { width: 10px; height: 9px; background: #f0f0f0; border: solid #cdcdcd; border-width: 3px 12px; margin-left: 4px; }
.hbar .end { margin-left: auto; }
.wrap { display: flex; align-items: center; justify-content: center; background: #fff; }
.wrap input { display: flex; align-items: center; justify-content: center; }
.wrap input:checked::before { content: ""; width: 8px; height: 4px; border: solid #222; border-width: 0 0 1px 1px; margin-bottom: 3px; transform: rotate(-45deg); }

.taskbar { display: flex; height: 40px; background: linear-gradient(90deg, #0a0a0a 0 62%, #182408 84%, #0b1008 96%); color: #fff; }
.sys { width: 48px; } .wide { width: 56px; } .task { width: 49px; }
.sys svg { width: 20px; height: 20px; }
.task svg, .wide svg { width: 24px; height: 24px; }
.youdao { width: 24px; border-radius: 3px; background: #e41c1c; font: bold 10px/24px "Noto Sans CJK SC", sans-serif; text-align: center; }
.task.running { background: linear-gradient(#77b4f5, #77b4f5) center bottom / 40px 2px no-repeat; }
.task.active { background: linear-gradient(#77b4f5, #77b4f5) center bottom / 100% 2px no-repeat #3b3b3b; }
.tray { width: 24px; }
.tray svg { width: 16px; height: 16px; }
.ime { font: 13px/16px "Noto Sans CJK SC", sans-serif; }
.sogou { width: 32px; }
.sogou svg { width: 16px; height: 16px; }
.clock { width: 77px; text-align: center; font: 12px/19px var(--ui); padding-top: 1px; }
.notice { width: 47px; padding-right: 11px; box-sizing: border-box; border-right: 1px solid #777; margin-right: 4px; }
.notice svg { width: 18px; height: 18px; }

.floater { position: absolute; right: -26px; top: 591px; box-sizing: border-box; width: 44px; height: 44px; border-radius: 50%; border: 3px solid #e6e6e6; background: radial-gradient(circle at 40% 35%, #5fd774, #36b452); box-shadow: 0 1px 3px #666; color: #fff; font: bold 12px/38px var(--ui); }
</style>
